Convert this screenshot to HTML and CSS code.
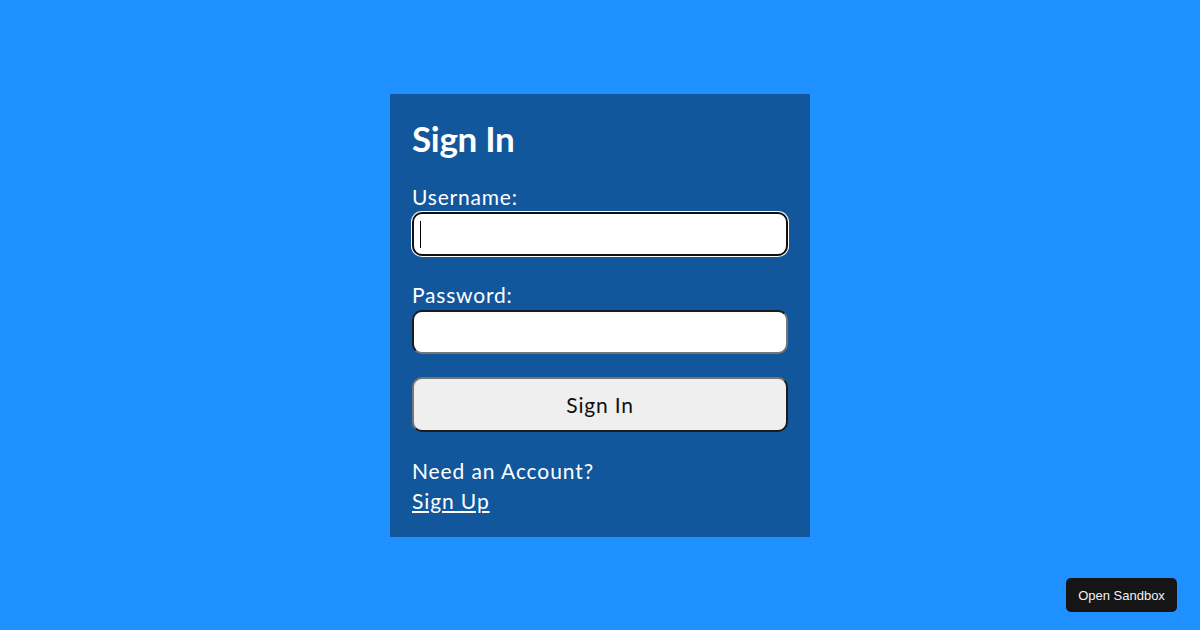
FILE: index.html
```html
<!DOCTYPE html>
<html lang="en">
<head>
<meta charset="utf-8">
<title>Sign In</title>
<link rel="stylesheet" href="styles.css">
</head>
<body>
<main class="page">
  <form class="card">
    <h1 class="title">Sign In</h1>
    <label class="label" for="username">Username:</label>
    <div class="field">
      <input class="input input-focused" id="username" type="text">
      <span class="caret"></span>
    </div>
    <label class="label" for="password">Password:</label>
    <div class="field">
      <input class="input" id="password" type="password">
    </div>
    <button class="submit" type="button">Sign In</button>
    <p class="prompt">Need an Account?</p>
    <a class="link" href="#">Sign Up</a>
  </form>
</main>
<a class="sandbox" href="#">Open Sandbox</a>
</body>
</html>
```

FILE: styles.css
```css
html, body {
  margin: 0;
  height: 100%;
}
body {
  background: #1e90ff;
  font-family: "Lato", "Noto Sans", sans-serif;
}
.page {
  height: 100%;
  display: flex;
  align-items: center;
  justify-content: center;
}
.card {
  width: 420px;
  box-sizing: border-box;
  padding: 22px 22px 21px;
  background: #12579b;
  color: #fff;
  display: flex;
  flex-direction: column;
}
.title {
  margin: 0 0 24px;
  font-size: 35px;
  line-height: 44px;
  font-weight: 700;
  letter-spacing: -0.3px;
}
.label {
  font-size: 21px;
  line-height: 26px;
  letter-spacing: 0.8px;
  margin-bottom: 2px;
}
.field {
  position: relative;
  margin-bottom: 26px;
}
.input {
  display: block;
  width: 100%;
  height: 44px;
  box-sizing: border-box;
  margin: 0;
  padding: 0 8px;
  background: #fff;
  border: 2px solid;
  border-color: #1b1b1b #767676 #767676 #1b1b1b;
  border-radius: 10px;
  font: inherit;
  font-size: 20px;
  outline: none;
}
.input-focused {
  border-color: #101010;
  box-shadow: 0 0 0 1px #fff;
}
.caret {
  position: absolute;
  left: 8px;
  top: 9px;
  width: 1px;
  height: 27px;
  background: #000;
}
.submit {
  margin: -3px 0 0;
  height: 55px;
  box-sizing: border-box;
  background: #efefef;
  border: 2px solid;
  border-color: #767676 #1b1b1b #1b1b1b #767676;
  border-radius: 10px;
  font: inherit;
  font-size: 21px;
  letter-spacing: 0.8px;
  color: #111;
}
.prompt {
  margin: 24px 0 0;
  font-size: 21px;
  line-height: 30px;
  letter-spacing: 0.9px;
}
.link {
  color: #fff;
  font-size: 21px;
  line-height: 30px;
  letter-spacing: 0.9px;
  align-self: flex-start;
  text-decoration: underline;
}
.sandbox {
  position: fixed;
  right: 23px;
  bottom: 18px;
  width: 111px;
  height: 34px;
  box-sizing: border-box;
  display: flex;
  align-items: center;
  justify-content: center;
  background: #151515;
  color: #f2f2f2;
  border-radius: 5px;
  font-family: "Liberation Sans", Arial, sans-serif;
  font-size: 13px;
  text-decoration: none;
}
```
